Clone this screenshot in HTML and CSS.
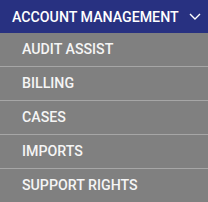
FILE: index.html
```html
<!DOCTYPE html>
<html lang="en">
<head>
  <meta charset="UTF-8">
  <meta name="viewport" content="width=device-width, initial-scale=1.0">
  <title>Account menu</title>
  <link rel="stylesheet" href="styles.css">
</head>
<body>
  <div class="menu">
    <div class="menu-header">
      <span>ACCOUNT MANAGEMENT</span>
      <svg class="chevron" width="12" height="7" viewBox="0 0 12 7">
        <path d="M1 1 L6 6 L11 1" fill="none" stroke="#fff" stroke-width="1.4"/>
      </svg>
    </div>
    <ul class="menu-items">
      <li class="menu-item">AUDIT ASSIST</li>
      <li class="menu-item">BILLING</li>
      <li class="menu-item">CASES</li>
      <li class="menu-item">IMPORTS</li>
      <li class="menu-item">SUPPORT RIGHTS</li>
    </ul>
  </div>
</body>
</html>
```

FILE: styles.css
```css
/* Reset */
body, ul, li {
  margin: 0;
  padding: 0;
}

body {
  font-family: Roboto, "Liberation Sans", sans-serif;
  background-color: #808080;
}

.menu {
  width: 208px;
}

.menu-header {
  display: flex;
  align-items: center;
  height: 33px;
  padding-left: 12px;
  background-color: #283181;
  color: #fff;
  font-size: 14.2px;
  font-weight: 500;
}

.chevron {
  margin-left: 10px;
}

.menu-items {
  list-style: none;
  background-color: #808080;
}

.menu-item {
  height: 33px;
  line-height: 33px;
  padding-left: 22px;
  color: #f5f5f5;
  font-size: 14.2px;
  font-weight: 500;
  border-bottom: 1px solid #a6a6a6;
}

.menu-item:last-child {
  border-bottom: none;
}
```
